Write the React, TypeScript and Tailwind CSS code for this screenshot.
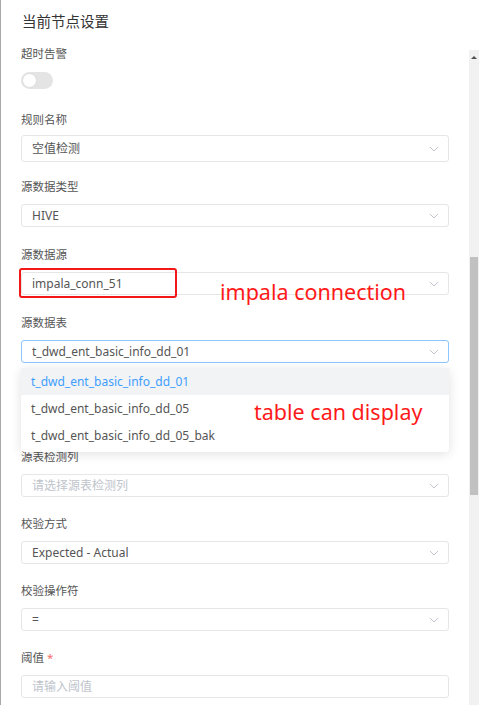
import type { ReactNode } from "react";

const font = { fontFamily: '"Noto Sans", "Noto Sans CJK SC", sans-serif' };

function Chevron() {
  return (
    <svg width="10" height="6" viewBox="0 0 10 6" className="shrink-0">
      <path d="M1 1 L5 5 L9 1" fill="none" stroke="#c0c4cc" strokeWidth="1" />
    </svg>
  );
}

function Label({ children, className = "" }: { children: ReactNode; className?: string }) {
  return <div className={`h-[16px] text-[11.5px] leading-[16px] text-[#555] ${className}`}>{children}</div>;
}

function Box({
  value,
  placeholder,
  select = true,
  focused = false,
  tall = false,
  className = "",
  children,
}: {
  value?: string;
  placeholder?: string;
  select?: boolean;
  focused?: boolean;
  tall?: boolean;
  className?: string;
  children?: ReactNode;
}) {
  return (
    <div
      className={`relative flex items-center justify-between rounded-[3px] border bg-white pl-[10px] pr-[9px] text-[12px] ${
        tall ? "h-[27px]" : "h-[23px]"
      } ${focused ? "border-[#8cc5ff]" : "border-[#e6e6e6]"} ${className}`}
    >
      {value ? (
        <span className="text-[#555]">{value}</span>
      ) : (
        <span className="text-[#c0c4cc]">{placeholder}</span>
      )}
      {select && <Chevron />}
      {children}
    </div>
  );
}

// label top → box top 25px, box 23px, then ~20px to the next label
function Field({ label, children, className = "mb-[20px]" }: { label: ReactNode; children: ReactNode; className?: string }) {
  return (
    <div className={className}>
      <Label className="mb-[9px]">{label}</Label>
      {children}
    </div>
  );
}

const tables = ["t_dwd_ent_basic_info_dd_01", "t_dwd_ent_basic_info_dd_05", "t_dwd_ent_basic_info_dd_05_bak"];

export default function App() {
  return (
    <div className="relative flex h-[705px] w-[479px] flex-col overflow-hidden border-l border-[#a8a8a8] bg-white" style={font}>
      <header className="flex h-[44px] shrink-0 items-center pl-[21px] text-[14.5px] text-[#333]">当前节点设置</header>

      <div className="flex min-h-0 flex-1">
        <div className="flex-1 overflow-hidden pl-[20px] pr-[20px]">
          <Label className="mt-[2px]">超时告警</Label>
          <div className="mt-[10px] flex h-[17px] w-[32px] items-center rounded-full bg-[#e4e4e4] pl-[1px]">
            <div className="h-[15px] w-[15px] rounded-full border border-[#dcdcdc] bg-white" />
          </div>

          <div className="mt-[23px] mb-[17px]">
            <Label className="mb-[7px]">规则名称</Label>
            <Box value="空值检测" tall />
          </div>

          <Field label="源数据类型">
            <Box value="HIVE" />
          </Field>

          <Field label="源数据源">
            <Box value="impala_conn_51">
              <div className="absolute left-[-3px] top-[-5px] h-[30px] w-[158px] rounded-[3px] border-2 border-[#f21818]" />
            </Box>
          </Field>

          <Field label="源数据表">
            <Box value="t_dwd_ent_basic_info_dd_01" focused>
              <ul className="absolute left-[-1px] right-[-1px] top-[27px] z-10 rounded-[4px] bg-white pb-[3px] shadow-[0_2px_12px_0_rgba(0,0,0,0.12)]">
                {tables.map((t, i) => (
                  <li
                    key={t}
                    className={`flex h-[27px] items-center pl-[10px] text-[12px] ${
                      i === 0 ? "bg-[#f2f3f5] text-[#409eff]" : "text-[#555]"
                    }`}
                  >
                    {t}
                  </li>
                ))}
              </ul>
            </Box>
          </Field>

          {/* row hidden under the open dropdown */}
          <div className="h-[66px]" />

          <Field label="源表检测列" className="mb-[19px]">
            <Box placeholder="请选择源表检测列" />
          </Field>

          <Field label="校验方式" className="mb-[19px]">
            <Box value="Expected - Actual" />
          </Field>

          <Field label="校验操作符" className="mb-[19px]">
            <Box value="=" />
          </Field>

          <Field
            className="mb-[19px]"
            label={
              <>
                阈值 <span className="text-[#f56c6c]">*</span>
              </>
            }
          >
            <Box placeholder="请输入阈值" select={false} />
          </Field>
        </div>

        <div className="mt-[6px] flex w-[10px] shrink-0 flex-col bg-[#f1f1f1]">
          <div className="flex h-[14px] items-center justify-center">
            <div className="h-0 w-0 border-x-[3px] border-b-[3px] border-x-transparent border-b-[#505050]" />
          </div>
          <div className="ml-[1px] mt-[193px] h-[238px] w-[8px] bg-[#c1c1c1]" />
        </div>
      </div>

      <div className="absolute left-[219px] top-[277px] text-[21.5px] leading-[30px] text-[#ff1a1a]">impala connection</div>
      <div className="absolute left-[253px] top-[397px] z-20 text-[21.5px] leading-[30px] text-[#ff1a1a]">table can display</div>
    </div>
  );
}
